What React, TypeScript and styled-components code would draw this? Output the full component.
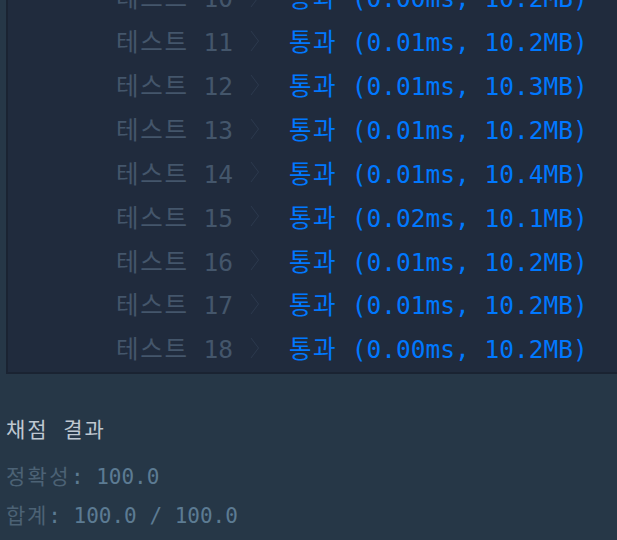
import React from 'react';
import styled, { createGlobalStyle } from 'styled-components';

const GlobalStyle = createGlobalStyle`
  html, body {
    margin: 0;
    padding: 0;
    background-color: #263747;
    overflow: hidden;
  }
`;

const Page = styled.div`
  width: 617px;
  height: 540px;
  overflow: hidden;
  padding-left: 6px;
  box-sizing: border-box;
  font-family: 'DejaVu Sans Mono', 'Noto Sans CJK KR', monospace;
`;

const Console = styled.div`
  margin-top: -25px;
  width: 640px;
  background-color: #202b3d;
  border-left: 2px solid #1a2332;
  border-bottom: 2px solid #1a2332;
  padding: 0 0 2px 108px;
  box-sizing: border-box;
`;

const Row = styled.div`
  display: flex;
  align-items: center;
  height: 43.86px;
  font-size: 24.5px;
  white-space: pre;
`;

interface IHangul {
  spacing: number;
}

const Hangul = styled.span<IHangul>`
  letter-spacing: ${(props) => props.spacing}px;
`;

const CaseLabel = styled.span`
  color: #44566b;
`;

const Chevron = styled.svg`
  width: 10px;
  height: 22px;
  margin-left: 17px;
  flex-shrink: 0;
`;

const Result = styled.span`
  margin-left: 29px;
  color: #0078ff;
`;

const Summary = styled.div`
  padding-top: 37px;
  font-size: 21px;
`;

const SummaryTitle = styled.div`
  color: #bfc8d1;
  line-height: 39px;
  margin-bottom: 8px;
  letter-spacing: 2px;
`;

const ScoreLine = styled.div`
  line-height: 39px;
  white-space: pre;
`;

const ScoreLabel = styled.span`
  color: #4c6275;
`;

const ScoreValue = styled.span`
  color: #5c7b93;
`;

interface ICase {
  no: number;
  time: string;
  memory: string;
}

const cases: ICase[] = [
  { no: 10, time: '0.00', memory: '10.2' },
  { no: 11, time: '0.01', memory: '10.2' },
  { no: 12, time: '0.01', memory: '10.3' },
  { no: 13, time: '0.01', memory: '10.2' },
  { no: 14, time: '0.01', memory: '10.4' },
  { no: 15, time: '0.02', memory: '10.1' },
  { no: 16, time: '0.01', memory: '10.2' },
  { no: 17, time: '0.01', memory: '10.2' },
  { no: 18, time: '0.00', memory: '10.2' },
];

function App() {
  return (
    <>
      <GlobalStyle />
      <Page>
        <Console>
          {cases.map((c) => (
            <Row key={`case${c.no}`}>
              <CaseLabel>
                <Hangul spacing={1.7}>테스트</Hangul>
                {` ${c.no}`}
              </CaseLabel>
              <Chevron viewBox="0 0 10 22">
                <polyline
                  points="1,1 8.5,11 1,21"
                  fill="none"
                  stroke="#2c3a4e"
                  strokeWidth="1"
                />
              </Chevron>
              <Result>
                <Hangul spacing={1.5}>통과</Hangul>
                {` (${c.time}ms, ${c.memory}MB)`}
              </Result>
            </Row>
          ))}
        </Console>
        <Summary>
          <SummaryTitle>채점 결과</SummaryTitle>
          <ScoreLine>
            <ScoreLabel>
              <Hangul spacing={2.3}>정확성</Hangul>
            </ScoreLabel>
            <ScoreValue>: 100.0</ScoreValue>
          </ScoreLine>
          <ScoreLine>
            <ScoreLabel>
              <Hangul spacing={1.8}>합계</Hangul>
            </ScoreLabel>
            <ScoreValue>: 100.0 / 100.0</ScoreValue>
          </ScoreLine>
        </Summary>
      </Page>
    </>
  );
}

export default App;
